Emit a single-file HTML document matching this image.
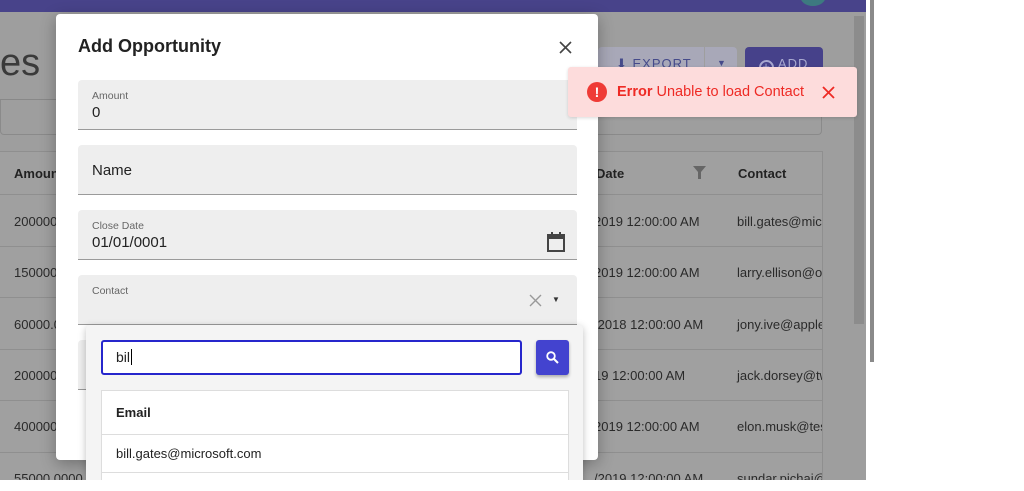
<!DOCTYPE html>
<html><head><style>
*{box-sizing:border-box;margin:0;padding:0}
body{width:1024px;height:491px;position:relative;overflow:hidden;background:#fff;font-family:"Liberation Sans",sans-serif;color:#222}
.abs{position:absolute}
#wrap{position:absolute;left:0;top:0;width:1024px;height:480px;overflow:hidden}
#bg{left:0;top:0;width:866px;height:480px;background:#9e9e9e;overflow:hidden}
.cell{position:absolute;font-size:13px;color:#2a2a2a;white-space:nowrap}
.row{position:absolute;left:0;width:822px;height:1px;background:#8f8f8f}
.field{position:absolute;left:78px;width:499px;height:50px;background:#eeeeee;border-radius:4px 4px 0 0;border-bottom:1px solid #9a9a9a}
.lbl{position:absolute;left:14px;top:10px;font-size:10.5px;color:#666}
.val{position:absolute;left:14px;top:25px;font-size:15px;color:#222}
</style></head><body>
<div id="wrap">
<div id="bg" class="abs">
  <div class="abs" style="left:0;top:0;width:866px;height:12px;background:#48438a"></div>
  <div class="abs" style="left:800px;top:-14px;width:26px;height:20px;border-radius:50%;background:#3d7a80"></div>
  <div class="abs" style="left:0;top:42px;font-size:38px;color:#3a3a3a">es</div>
  <div class="abs" style="left:0;top:99px;width:822px;height:1px;background:#888"></div>
  <div class="abs" style="left:0;top:100px;width:822px;height:35px;border:1px solid #8a8a8a;border-top:none;border-radius:0 0 4px 4px"></div>
  <div class="abs" style="left:598px;top:47px;width:106px;height:32px;background:#a8a8b8;border-radius:4px 0 0 4px;color:#454a8a;font-size:13px;letter-spacing:1px;padding:9px 0 0 18px">&#11015; EXPORT</div>
  <div class="abs" style="left:705px;top:47px;width:32px;height:32px;background:#a8a8b8;border-radius:0 4px 4px 0;color:#454a8a;font-size:9px;padding:11px 0 0 12px">&#9660;</div>
  <div class="abs" style="left:745px;top:47px;width:78px;height:32px;background:#46418a;border-radius:4px;color:#a8a8d0;font-size:13px;letter-spacing:1px;padding:9px 0 0 14px"><span style="display:inline-block;width:15px;height:15px;border:2px solid #a8a8d0;border-radius:50%;vertical-align:-3px;text-align:center;line-height:10px;font-size:13px">+</span> ADD</div>
  <div class="abs" style="left:0;top:151px;width:823px;height:340px;background:#a0a0a0;border-right:1px solid #8f8f8f;border-top:1px solid #8f8f8f;overflow:hidden">
  <div class="row" style="top:42px"></div><div class="row" style="top:94px"></div><div class="row" style="top:145px"></div><div class="row" style="top:197px"></div><div class="row" style="top:248px"></div><div class="row" style="top:300px"></div>
  <div class="cell" style="left:14px;top:14px;font-weight:bold;color:#222">Amount</div>
  <div class="cell" style="left:596px;top:14px;font-weight:bold;color:#222">Date</div>
  <svg class="abs" style="left:693px;top:14px" width="13" height="13" viewBox="0 0 13 13"><path d="M0 0H13L8 6V13H5V6Z" fill="#666"/></svg>
  <div class="cell" style="left:738px;top:14px;font-weight:bold;color:#222">Contact</div>
  <div class="cell" style="left:14px;top:62px">200000</div><div class="cell" style="left:594px;top:62px">2019 12:00:00 AM</div><div class="cell" style="left:737px;top:62px">bill.gates@mic</div>
  <div class="cell" style="left:14px;top:113px">150000</div><div class="cell" style="left:594px;top:113px">2019 12:00:00 AM</div><div class="cell" style="left:737px;top:113px">larry.ellison@or</div>
  <div class="cell" style="left:14px;top:165px">60000.0</div><div class="cell" style="left:594px;top:165px">/2018 12:00:00 AM</div><div class="cell" style="left:737px;top:165px">jony.ive@apple</div>
  <div class="cell" style="left:14px;top:216px">200000</div><div class="cell" style="left:594px;top:216px">19 12:00:00 AM</div><div class="cell" style="left:737px;top:216px">jack.dorsey@tw</div>
  <div class="cell" style="left:14px;top:267px">400000</div><div class="cell" style="left:594px;top:267px">2019 12:00:00 AM</div><div class="cell" style="left:737px;top:267px">elon.musk@tes</div>
  <div class="cell" style="left:14px;top:319px">55000.0000</div><div class="cell" style="left:594px;top:319px">/2019 12:00:00 AM</div><div class="cell" style="left:737px;top:319px">sundar.pichai@</div>
  </div>
  <div class="abs" style="left:854px;top:16px;width:10px;height:308px;background:#8c8c8c"></div>
</div>
<div class="abs" style="left:870px;top:0;width:4px;height:362px;background:#8a8a8a"></div>

<div class="abs" style="left:56px;top:14px;width:542px;height:446px;background:#fff;border-radius:4px;box-shadow:0 4px 16px rgba(0,0,0,.3)"></div>
<div class="abs" style="left:78px;top:36px;font-size:18px;font-weight:bold;color:#222">Add Opportunity</div>
<svg class="abs" style="left:559px;top:41px" width="13" height="13" viewBox="0 0 13 13"><path d="M1 1L12 12M12 1L1 12" stroke="#444" stroke-width="1.6"/></svg>
<div class="field" style="top:80px"><div class="lbl">Amount</div><div class="val" style="top:24px">0</div></div>
<div class="field" style="top:145px"><div class="val" style="top:17px">Name</div></div>
<div class="field" style="top:210px"><div class="lbl">Close Date</div><div class="val" style="top:24px">01/01/0001</div>
  <svg class="abs" style="left:469px;top:22px" width="18" height="20" viewBox="0 0 18 20"><rect x="1" y="3" width="16" height="16" fill="none" stroke="#444" stroke-width="2"/><rect x="1" y="3" width="16" height="4" fill="#444"/><rect x="4" y="0" width="2" height="4" fill="#444"/><rect x="12" y="0" width="2" height="4" fill="#444"/></svg></div>
<div class="field" style="top:275px"><div class="lbl">Contact</div>
  <svg class="abs" style="left:451px;top:19px" width="13" height="13" viewBox="0 0 13 13"><path d="M1 1L12 12M12 1L1 12" stroke="#999" stroke-width="1.4"/></svg>
  <div class="abs" style="left:474px;top:20px;font-size:8px;color:#333">&#9660;</div></div>
<div class="field" style="top:340px"></div>

<div class="abs" style="left:86px;top:325px;width:497px;height:170px;background:#f4f4f4;border-radius:4px;box-shadow:0 2px 8px rgba(0,0,0,.25)"></div>
<div class="abs" style="left:101px;top:340px;width:421px;height:35px;background:#fff;border:2px solid #2626cc;border-radius:3px;font-size:14px;padding:7px 0 0 13px;color:#222">bil<span style="border-left:1px solid #000;margin-left:1px"></span></div>
<div class="abs" style="left:536px;top:340px;width:33px;height:35px;background:#4343cf;border-radius:3px;box-shadow:0 2px 3px rgba(0,0,0,.3)"><svg style="position:absolute;left:10px;top:11px" width="13" height="13" viewBox="0 0 13 13"><circle cx="5" cy="5" r="3.8" fill="none" stroke="#fff" stroke-width="1.8"/><path d="M8 8L12 12" stroke="#fff" stroke-width="2"/></svg></div>
<div class="abs" style="left:101px;top:390px;width:468px;height:101px;background:#fff;border:1px solid #ddd"></div>
<div class="abs" style="left:101px;top:434px;width:468px;height:1px;background:#ddd"></div>
<div class="abs" style="left:101px;top:472px;width:468px;height:1px;background:#ddd"></div>
<div class="abs" style="left:116px;top:405px;font-size:13px;font-weight:bold;color:#222">Email</div>
<div class="abs" style="left:116px;top:446px;font-size:13px;color:#222">bill.gates@microsoft.com</div>

<div class="abs" style="left:568px;top:67px;width:289px;height:50px;background:#fddcdc;border-radius:3px;box-shadow:0 1px 3px rgba(0,0,0,.15)"></div>
<div class="abs" style="left:587px;top:82px;width:20px;height:20px;border-radius:50%;background:#ef3b36;color:#fff;font-weight:bold;font-size:14px;text-align:center;line-height:20px">!</div>
<div class="abs" style="left:617px;top:84px;font-size:14.5px;color:#ee2a24"><b>Error</b> Unable to load Contact</div>
<svg class="abs" style="left:822px;top:86px" width="13" height="13" viewBox="0 0 13 13"><path d="M1 1L12 12M12 1L1 12" stroke="#ee2a24" stroke-width="1.8"/></svg>
</div>
</body></html>
